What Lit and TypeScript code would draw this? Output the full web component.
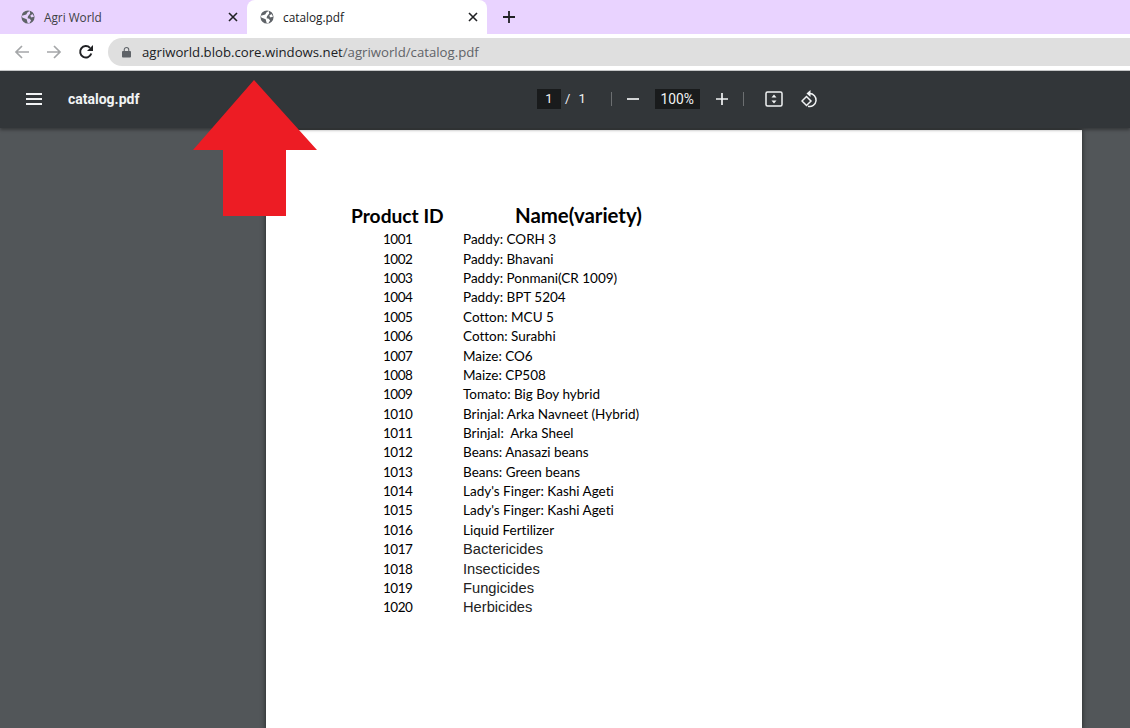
import { LitElement, css, html, svg } from 'lit';
import { customElement } from 'lit/decorators.js';

const calibri = [
    'Paddy: CORH 3', 'Paddy: Bhavani', 'Paddy: Ponmani(CR 1009)', 'Paddy: BPT 5204', 'Cotton: MCU 5',
    'Cotton: Surabhi', 'Maize: CO6', 'Maize: CP508', 'Tomato: Big Boy hybrid', 'Brinjal: Arka Navneet (Hybrid)',
    'Brinjal:  Arka Sheel', 'Beans: Anasazi beans', 'Beans: Green beans', "Lady's Finger: Kashi Ageti",
    "Lady's Finger: Kashi Ageti", 'Liquid Fertilizer',
];
const arial = ['Bactericides', 'Insecticides', 'Fungicides', 'Herbicides'];

const globe = svg`<svg class="globe" viewBox="0 0 16 16"><circle cx="8" cy="8" r="7.500" fill="#5f6368"/><path d="M1 6.500 6 5l1.500-2.500L10 1l.5 3L8 7l-.5 2.500L10 10l1.500 2-2 3-2-.5-1-4L1.500 8.500ZM13 4.500l2 3-3 1-1.500-2Z" fill="var(--gap)"/></svg>`;
const close = svg`<svg class="close" viewBox="0 0 10 10"><path d="M1 1l8 8M9 1l-8 8" stroke="#202124" stroke-width="1.600"/></svg>`;

@customElement('app-root')
export class AppRoot extends LitElement {
    static styles = css`
        :host {
            display: block;
            position: relative;
            width: 1130px;
            height: 728px;
            overflow: hidden;
            font-family: 'Open Sans', sans-serif;
        }

        .tabs {
            display: flex;
            height: 34px;
            background: #e9d3ff;
        }

        .tab {
            --gap: #e9d3ff;
            display: flex;
            align-items: center;
            box-sizing: border-box;
            width: 240px;
            height: 34px;
            padding: 0 9px 0 21px;
            font-size: 11.800px;
            color: #3c4043;
        }

        .tab.first {
            width: 247px;
        }

        .tab.active {
            --gap: #fff;
            position: relative;
            padding-left: 13px;
            background: #fff;
            border-radius: 8px 8px 0 0;
            color: #202124;
        }

        .globe {
            width: 14px;
            height: 14px;
            margin-right: 9px;
            flex: none;
        }

        .tab span {
            flex: 1;
        }

        .close {
            width: 10px;
            height: 10px;
            flex: none;
        }

        .new-tab {
            width: 12px;
            height: 12px;
            margin: 11px 0 0 16px;
        }

        .toolbar {
            display: flex;
            align-items: center;
            box-sizing: border-box;
            height: 37px;
            padding-left: 14px;
            background: #fff;
            border-bottom: 1px solid #c9cacb;
        }

        .toolbar svg {
            flex: none;
        }

        .nav {
            width: 16px;
            height: 14px;
            margin-right: 16px;
        }

        .reload {
            width: 16px;
            height: 16px;
            margin-right: 14px;
        }

        .address {
            display: flex;
            align-items: center;
            flex: 1;
            height: 28px;
            padding-left: 14px;
            border-radius: 14px 0 0 14px;
            background: #dfdfdf;
            font-size: 13.200px;
            color: #5f6368;
        }

        .address b {
            font-weight: 400;
            color: #202124;
        }

        .lock {
            width: 9px;
            height: 12px;
            margin-right: 11px;
        }

        .pdfbar {
            display: flex;
            align-items: center;
            box-sizing: border-box;
            height: 57px;
            padding: 0 0 2px 26px;
            background: #323639;
            box-shadow: 0 2px 3px rgba(0, 0, 0, 0.35);
            position: relative;
            color: #f1f3f4;
            font-family: Roboto, sans-serif;
        }

        .title {
            display: flex;
            align-items: center;
            gap: 26px;
            width: 511px;
            font-size: 14px;
            font-weight: 700;
        }

        .menu {
            width: 16px;
            height: 12px;
        }

        .controls {
            display: flex;
            align-items: center;
            font-size: 13px;
        }

        .field {
            display: flex;
            align-items: center;
            justify-content: center;
            height: 20px;
            background: #191b1c;
        }

        .field.page {
            width: 24px;
        }

        .field.zoom {
            width: 45px;
            font-size: 13.800px;
        }

        .slash {
            margin: 0 8px 0 4px;
        }

        .sep {
            width: 1px;
            height: 14px;
            margin: 0 15px 0 25px;
            background: #6c6f71;
        }

        .sep.short {
            margin: 0 21px 0 15px;
        }

        .ctl {
            width: 12px;
            height: 12px;
        }

        .ctl.minus {
            margin-right: 16px;
        }

        .ctl.plus {
            margin-left: 16px;
        }

        .fit {
            width: 18px;
            height: 16px;
            margin-right: 18px;
        }

        .rotate {
            width: 18px;
            height: 18px;
        }

        .viewer {
            box-sizing: border-box;
            height: 600px;
            padding: 2px 0 0 266px;
            background: #525659;
        }

        .sheet {
            box-sizing: border-box;
            width: 816px;
            height: 600px;
            padding: 75px 0 0 85px;
            background: #fff;
            box-shadow: 0 0 5px rgba(0, 0, 0, 0.6);
            font-family: Lato, sans-serif;
            font-variant-ligatures: none;
            color: #000;
        }

        .head {
            display: grid;
            grid-template-columns: 164px auto;
            height: 21px;
            font-size: 19.200px;
            font-weight: 700;
            line-height: 21px;
        }

        .head .wide {
            font-size: 20.400px;
        }

        .rows {
            margin-top: 4.400px;
        }

        .row {
            display: grid;
            grid-template-columns: 112px auto;
            height: 19.370px;
            font-size: 13.500px;
            line-height: 19px;
            white-space: pre;
        }

        .row .id {
            padding-left: 32px;
            letter-spacing: -0.500px;
        }

        .row.sans .name {
            font-family: 'Liberation Sans', sans-serif;
            font-size: 14.700px;
            color: #222;
        }

        .arrow {
            position: absolute;
            left: 193px;
            top: 80px;
            width: 124px;
            height: 136px;
        }
    `;

    render() {
        const rows = [...calibri, ...arial];
        return html`
            <div class="tabs">
                <div class="tab first">${globe}<span>Agri World</span>${close}</div>
                <div class="tab active">${globe}<span>catalog.pdf</span>${close}</div>
                <svg class="new-tab" viewBox="0 0 12 12"><path d="M6 0v12M0 6h12" stroke="#202124" stroke-width="1.800"/></svg>
            </div>
            <div class="toolbar">
                <svg class="nav" viewBox="0 0 16 14"><path d="M15 7H2M8 1 2 7l6 6" fill="none" stroke="#a5a7a9" stroke-width="1.700"/></svg>
                <svg class="nav" viewBox="0 0 16 14"><path d="M1 7h13M8 1l6 6-6 6" fill="none" stroke="#a5a7a9" stroke-width="1.700"/></svg>
                <svg class="reload" viewBox="0 0 16 16"><path d="M13.300 9.500A5.700 5.700 0 1 1 12 3.900" fill="none" stroke="#202124" stroke-width="2"/><path d="M15 1v6H9Z" fill="#202124"/></svg>
                <div class="address">
                    <svg class="lock" viewBox="0 0 10 12"><path d="M1 5h8a1 1 0 0 1 1 1v5a1 1 0 0 1-1 1H1a1 1 0 0 1-1-1V6a1 1 0 0 1 1-1Z" fill="#5f6368"/><path d="M2.500 5V3.500a2.500 2.500 0 0 1 5 0V5" fill="none" stroke="#5f6368" stroke-width="1.200"/></svg>
                    <span><b>agriworld.blob.core.windows.net</b>/agriworld/catalog.pdf</span>
                </div>
            </div>
            <div class="pdfbar">
                <div class="title">
                    <svg class="menu" viewBox="0 0 16 12"><path d="M0 1h16M0 6h16M0 11h16" stroke="#f1f3f4" stroke-width="2"/></svg>
                    <span>catalog.pdf</span>
                </div>
                <div class="controls">
                    <div class="field page">1</div>
                    <span class="slash">/</span><span>1</span>
                    <div class="sep"></div>
                    <svg class="ctl minus" viewBox="0 0 12 12"><path d="M0 6h12" stroke="#f1f3f4" stroke-width="1.700"/></svg>
                    <div class="field zoom">100%</div>
                    <svg class="ctl plus" viewBox="0 0 12 12"><path d="M6 0v12M0 6h12" stroke="#f1f3f4" stroke-width="1.700"/></svg>
                    <div class="sep short"></div>
                    <svg class="fit" viewBox="0 0 18 16"><rect x="1" y="1" width="16" height="14" rx="1.500" fill="none" stroke="#f1f3f4" stroke-width="1.500"/><path d="M9 3.500 11.500 6.500h-5ZM9 12.500 6.500 9.500h5Z" fill="#f1f3f4"/></svg>
                    <svg class="rotate" viewBox="0 0 18 18"><path d="M8.500 3.500a6.500 6.500 0 1 1-1.500 12.800" fill="none" stroke="#f1f3f4" stroke-width="1.500"/><path d="M9.500 0 5.500 3.500l4 3.500Z" fill="#f1f3f4"/><path d="M5.500 6.500 1 11l4.500 4.500L10 11Z" fill="none" stroke="#f1f3f4" stroke-width="1.500"/></svg>
                </div>
            </div>
            <div class="viewer">
                <div class="sheet">
                    <div class="head"><span>Product ID</span><span class="wide">Name(variety)</span></div>
                    <div class="rows">
                        ${rows.map(
                            (name, i) => html`<div class="row ${i >= calibri.length ? 'sans' : ''}">
                                <span class="id">${1001 + i}</span><span class="name">${name}</span>
                            </div>`,
                        )}
                    </div>
                </div>
            </div>
            <svg class="arrow" viewBox="0 0 124 136"><path d="M61 0 124 70H93V136H30V70H0Z" fill="#ed1c24"/></svg>
        `;
    }
}
